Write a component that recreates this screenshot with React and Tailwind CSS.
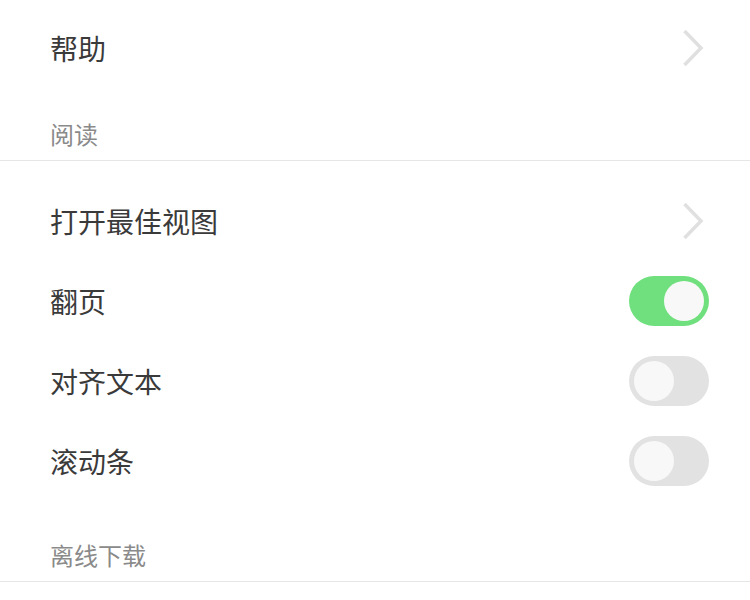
import React from 'react';

const font = { fontFamily: '"Noto Sans CJK SC", "Noto Sans", sans-serif' };

const Chevron = () => (
    <svg width="22" height="38" viewBox="0 0 22 38" className="mr-[5px]">
        <polyline points="2.5,2 19,19 2.5,36" fill="none" stroke="#e0e0e0" strokeWidth="3.5" />
    </svg>
);

const Toggle = ({ on }) => (
    <div
        className={`w-[80px] h-[50px] rounded-full p-[5px] flex ${on ? 'bg-[#70e07e] justify-end' : 'bg-[#e2e2e2] justify-start'}`}
    >
        <div className="w-[40px] h-[40px] rounded-full bg-[#f8f8f8]"></div>
    </div>
);

const Row = ({ label, children }) => (
    <div className="h-[80px] flex items-center justify-between pl-[50px] pr-[41px]">
        <span className="text-[28px] text-[#3a3a3a] leading-none">{label}</span>
        {children}
    </div>
);

const Header = ({ label }) => (
    <div className="h-[73px] flex items-end pl-[50px] pb-[14px] border-b border-[#e6e6e6]">
        <span className="text-[24px] text-[#8a8a8a] leading-none">{label}</span>
    </div>
);

export default function App() {
    return (
        <div className="w-[750px] h-[600px] bg-white overflow-hidden pt-[8px]" style={font}>
            <Row label="帮助">
                <Chevron />
            </Row>
            <Header label="阅读" />
            <div className="pt-[20px] pb-[8px]">
                <Row label="打开最佳视图">
                    <Chevron />
                </Row>
                <Row label="翻页">
                    <Toggle on />
                </Row>
                <Row label="对齐文本">
                    <Toggle />
                </Row>
                <Row label="滚动条">
                    <Toggle />
                </Row>
            </div>
            <Header label="离线下载" />
        </div>
    );
}
